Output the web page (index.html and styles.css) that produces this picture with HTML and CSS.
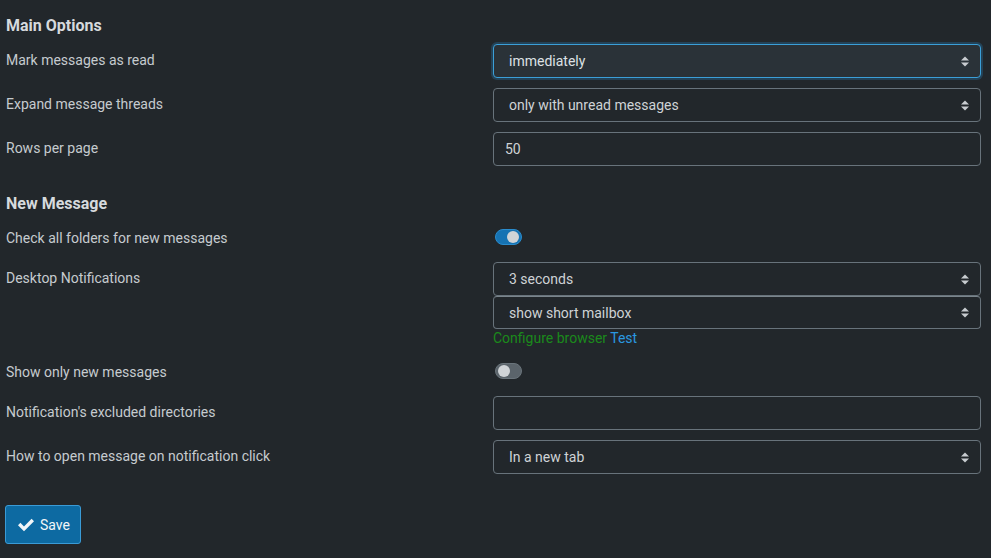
FILE: index.html
```html
<!DOCTYPE html>
<html>
<head>
<meta charset="utf-8">
<link rel="stylesheet" href="styles.css">
</head>
<body>
<form class="prefs">
  <h3 class="section">Main Options</h3>
  <div class="row">
    <label class="lbl">Mark messages as read</label>
    <div class="ctl">
      <div class="select focus"><span>immediately</span><svg class="arr" width="8" height="11" viewBox="0 0 8 11"><path d="M0 4.5L4 0.5L8 4.5Z M0 6.5L4 10.5L8 6.5Z"/></svg></div>
    </div>
  </div>
  <div class="row">
    <label class="lbl">Expand message threads</label>
    <div class="ctl">
      <div class="select"><span>only with unread messages</span><svg class="arr" width="8" height="11" viewBox="0 0 8 11"><path d="M0 4.5L4 0.5L8 4.5Z M0 6.5L4 10.5L8 6.5Z"/></svg></div>
    </div>
  </div>
  <div class="row">
    <label class="lbl">Rows per page</label>
    <div class="ctl">
      <div class="input"><span>50</span></div>
    </div>
  </div>

  <h3 class="section second">New Message</h3>
  <div class="row toggle-row">
    <label class="lbl">Check all folders for new messages</label>
    <div class="ctl">
      <span class="switch on"><span class="knob"></span></span>
    </div>
  </div>
  <div class="row">
    <label class="lbl">Desktop Notifications</label>
    <div class="ctl">
      <div class="select"><span>3 seconds</span><svg class="arr" width="8" height="11" viewBox="0 0 8 11"><path d="M0 4.5L4 0.5L8 4.5Z M0 6.5L4 10.5L8 6.5Z"/></svg></div>
      <div class="select joined"><span>show short mailbox</span><svg class="arr" width="8" height="11" viewBox="0 0 8 11"><path d="M0 4.5L4 0.5L8 4.5Z M0 6.5L4 10.5L8 6.5Z"/></svg></div>
      <div class="hint"><span class="green">Configure browser</span> <a class="link">Test</a></div>
    </div>
  </div>
  <div class="row toggle-row">
    <label class="lbl">Show only new messages</label>
    <div class="ctl">
      <span class="switch"><span class="knob"></span></span>
    </div>
  </div>
  <div class="row">
    <label class="lbl">Notification's excluded directories</label>
    <div class="ctl">
      <div class="input"></div>
    </div>
  </div>
  <div class="row">
    <label class="lbl">How to open message on notification click</label>
    <div class="ctl">
      <div class="select"><span>In a new tab</span><svg class="arr" width="8" height="11" viewBox="0 0 8 11"><path d="M0 4.5L4 0.5L8 4.5Z M0 6.5L4 10.5L8 6.5Z"/></svg></div>
    </div>
  </div>

  <div class="actions">
    <button type="button" class="btn"><svg class="check" width="18" height="14" viewBox="0 0 18 14"><path d="M1 7.2L3.4 4.8L7 8.4L14.6 0.8L17 3.2L7 13.2Z"/></svg><span>Save</span></button>
  </div>
</form>
</body>
</html>
```

FILE: styles.css
```css
html, body {
  margin: 0;
  padding: 0;
  background: #22272b;
}
body {
  font-family: Roboto, "Liberation Sans", Arial, sans-serif;
  font-size: 14px;
  line-height: 20px;
  color: #c6cbcf;
  width: 991px;
  height: 558px;
  overflow: hidden;
}
.prefs {
  padding: 16px 10px 0 6px;
}
.section {
  margin: 0 0 8px 0;
  font-size: 16px;
  line-height: 20px;
  font-weight: 700;
  color: #d6dadd;
}
.section.second {
  margin-top: 28px;
}
.row {
  display: grid;
  grid-template-columns: 487px 1fr;
  margin-bottom: 10px;
}
.lbl {
  padding-top: 6px;
  line-height: 20px;
}
.ctl {
  display: flex;
  flex-direction: column;
}
.select, .input {
  box-sizing: border-box;
  height: 34px;
  border: 1px solid #68737b;
  border-radius: 4px;
  background: #22272b;
  display: flex;
  align-items: center;
  color: #cfd3d6;
}
.select {
  padding: 0 11px 0 15px;
  justify-content: space-between;
}
.input {
  padding: 0 12px 0 11px;
}
.select.focus {
  background: #2a3238;
  border-color: #3b9fd8;
  box-shadow: 0 0 0 2px rgba(40, 135, 200, 0.28);
  color: #dde1e4;
}
.select.joined {
  height: 33px;
  border-top-color: #7a858c;
}
.arr {
  fill: #c8ccd0;
  flex: none;
}
.hint {
  line-height: 16px;
  margin-top: 1px;
}
.green {
  color: #1b8a1b;
}
.link {
  color: #2a98e0;
  text-decoration: none;
}
.toggle-row .ctl {
  height: 30px;
  justify-content: flex-start;
}
.switch {
  box-sizing: border-box;
  margin: 7px 0 0 2px;
  width: 27px;
  height: 16px;
  border-radius: 8px;
  background: #5b646b;
  border: 1px solid #6a747b;
  display: flex;
  align-items: center;
  padding: 0 2px;
}
.switch .knob {
  width: 12px;
  height: 12px;
  border-radius: 50%;
  background: #d0d4d7;
}
.switch.on {
  background: #1673b3;
  border-color: #2a8ccd;
  justify-content: flex-end;
}
.actions {
  padding-top: 21px;
  margin-left: -1px;
}
.btn {
  box-sizing: border-box;
  width: 76px;
  height: 39px;
  border: 1px solid #3a9bd6;
  border-radius: 3px;
  background: #0d6aa2;
  color: #f2f6f8;
  font-family: Roboto, "Liberation Sans", Arial, sans-serif;
  font-size: 14px;
  display: flex;
  align-items: center;
  gap: 5px;
  padding: 0 0 0 11px;
}
.check {
  fill: #f2f6f8;
  flex: none;
}
```
